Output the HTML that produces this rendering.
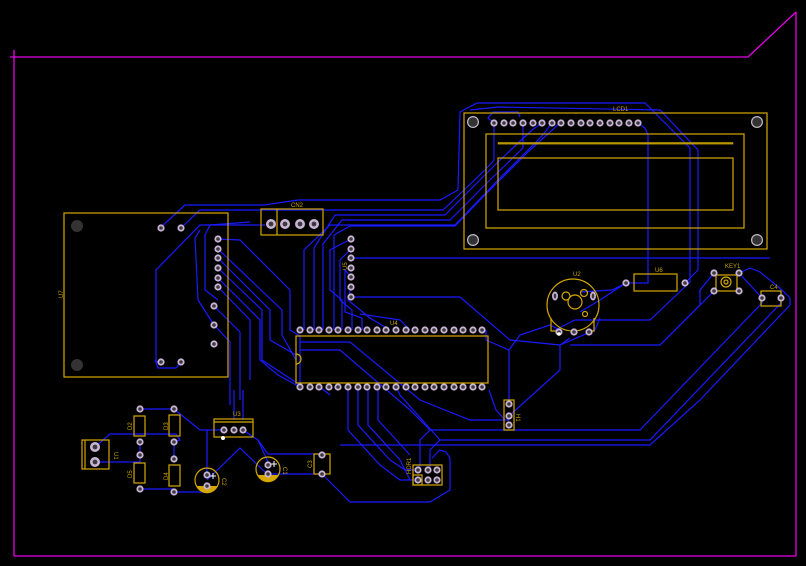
<!DOCTYPE html>
<html><head><meta charset="utf-8"><style>
html,body{margin:0;padding:0;background:#000;width:806px;height:566px;overflow:hidden}
svg{display:block}
text{font-family:"Liberation Sans",sans-serif;font-size:6px;fill:#c8a000}
</style></head><body>
<svg width="806" height="566" viewBox="0 0 806 566" xmlns="http://www.w3.org/2000/svg">
<defs>
<g id="p"><circle r="3.6" fill="#c9b3d6"/><circle r="1.8" fill="#3a3a3a"/></g>
<g id="pb"><circle r="5" fill="#c9b3d6"/><circle r="2.4" fill="#3a3a3a"/></g>
</defs>
<rect width="806" height="566" fill="#000"/>
<g stroke="#e600e6" stroke-width="1.3" fill="none">
<polyline points="10,57 748,57 796,12"/>
<line x1="796" y1="12" x2="796" y2="556"/>
<line x1="14" y1="50" x2="14" y2="556"/>
<line x1="14" y1="556" x2="796" y2="556"/>
</g>
<g stroke="#1a1aff" stroke-width="1.2" fill="none">
<polyline points="160,228 185,205 264,205 298,200 440,200 458,190 460,112 477,103 645,103 690,148 690,282 650,320 575,320 555,330"/>
<polyline points="181,228 200,210 443,210 464,190 485,170 494,160 494,123"/>
<polyline points="494,123 488,118 493,112 518,112 520,117"/>
<polyline points="304,330 304,250 330,225 455,225 498,180 516,162 542,136 552,123"/>
<polyline points="314,330 314,248 335,215 445,215 470,190 500,160 532,130 542,123"/>
<polyline points="323,330 323,244 342,220 450,220 490,180 523,148 523,123"/>
<polyline points="334,330 334,235 350,226 455,226 480,200 530,150 560,123"/>
<polyline points="351,258 770,258"/>
<polyline points="351,297 460,297 510,340 560,345 595,330 600,318"/>
<polyline points="638,123 645,128 648,135 648,283 626,283 600,300 580,312"/>
<polyline points="626,283 612,290 580,292"/>
<polyline points="685,283 698,270 698,150 660,110 498,107 470,110"/>
<polyline points="714,273 700,290 700,305 660,345 570,345"/>
<polyline points="739,273 750,268 760,272 782,290 790,298 790,305 700,400 650,445 340,445"/>
<polyline points="714,291 660,345"/>
<polyline points="739,273 762,298"/>
<polyline points="762,298 762,303 640,430 430,430 420,440 420,470"/>
<polyline points="781,298 781,303 650,440 440,440 430,450 430,470"/>
<polyline points="218,239 240,240 290,290 290,330 300,336 300,387"/>
<polyline points="218,249 282,310 282,335 296,360"/>
<polyline points="218,258 270,310 270,340 296,355"/>
<polyline points="218,268 262,310 262,360 300,385"/>
<polyline points="218,278 260,320 260,360 278,375 300,387"/>
<polyline points="218,287 250,320 250,380"/>
<polyline points="214,306 240,332 240,400"/>
<polyline points="214,325 230,342 230,405"/>
<polyline points="161,362 156,362 156,270 200,225 265,225"/>
<polyline points="181,362 176,368 158,368 155,360"/>
<polyline points="218,300 205,290 205,235 210,225 250,222"/>
<polyline points="200,230 195,238 198,300 214,325"/>
<polyline points="342,330 342,300 330,290 330,250 351,239"/>
<polyline points="352,330 352,310 340,300 340,260 351,249"/>
<polyline points="362,330 362,318 345,312 345,270 351,277"/>
<polyline points="351,287 348,300 370,318 390,330"/>
<polyline points="410,330 400,320 360,314"/>
<polyline points="300,342 350,342 420,400 470,420 509,420"/>
<polyline points="300,350 340,350 410,410 430,430"/>
<polyline points="486,330 486,340 509,350 509,404"/>
<polyline points="509,350 520,335 550,325 560,330"/>
<polyline points="509,416 560,370 560,345 570,338"/>
<polyline points="489,390 496,410 505,420"/>
<polyline points="348,387 348,430 380,465 400,480 417,480"/>
<polyline points="358,387 358,425 390,460 405,470 417,470"/>
<polyline points="368,387 368,425 400,460 410,480"/>
<polyline points="378,387 378,420 410,455"/>
<polyline points="432,458 440,450 446,452 450,458 450,490 430,502 350,502 322,474"/>
<polyline points="396,387 400,395 440,440"/>
<polyline points="320,387 330,395"/>
<polyline points="140,409 174,409"/>
<polyline points="140,489 174,489"/>
<polyline points="174,492 205,492 207,487"/>
<polyline points="95,447 110,434 176,434 180,440 174,442"/>
<polyline points="95,462 110,462 140,462 140,455"/>
<polyline points="140,442 140,455"/>
<polyline points="174,442 174,459"/>
<polyline points="174,409 200,430 224,430"/>
<polyline points="207,474 207,430"/>
<polyline points="207,480 240,448 265,472"/>
<polyline points="243,430 258,440 268,462"/>
<polyline points="258,440 268,454 322,454"/>
<polyline points="268,474 322,474"/>
<polyline points="234,420 234,390"/>
<polyline points="243,420 243,390"/>
</g>
<g stroke="#d4a800" stroke-width="1.2" fill="none">
<rect x="464" y="113" width="303" height="136"/>
<rect x="486" y="134" width="258" height="94"/>
<rect x="498" y="158" width="235" height="52"/>
<rect x="498" y="142.5" width="235" height="1.6" fill="#b89400" stroke-width="0.5"/>
<rect x="64" y="213" width="164" height="164"/>
<rect x="261" y="209" width="62" height="26"/>
<line x1="277" y1="209" x2="277" y2="235"/>
<rect x="296" y="336" width="192" height="47"/>
<circle cx="573" cy="305" r="26"/>
<circle cx="575" cy="302" r="7"/>
<circle cx="566" cy="296" r="4"/>
<circle cx="584" cy="293" r="3.5"/>
<circle cx="585" cy="314" r="2.5"/>
<polyline points="551,318 551,331 559,331"/>
<polyline points="594,318 594,331 590,331"/>
<rect x="634" y="274" width="43" height="17"/>
<rect x="716" y="275" width="21" height="16"/>
<circle cx="726" cy="282" r="5"/><circle cx="726" cy="282" r="2"/>
<rect x="761" y="291" width="20" height="15"/>
<rect x="504" y="400" width="10" height="30"/>
<rect x="413" y="465" width="29" height="20"/>
<rect x="413" y="475" width="9" height="10"/>
<rect x="82" y="440" width="27" height="29"/>
<line x1="85" y1="440" x2="85" y2="469"/>
<rect x="134" y="416" width="11" height="20"/>
<rect x="169" y="415" width="11" height="21"/>
<rect x="134" y="463" width="11" height="20"/>
<rect x="169" y="465" width="11" height="21"/>
<rect x="214" y="419" width="39" height="18"/>
<line x1="214" y1="422" x2="253" y2="422"/>
<circle cx="207" cy="480" r="12"/>
<circle cx="268" cy="469" r="12"/>
<rect x="314" y="454" width="16" height="20"/>
<path d="M296 354 a5 5 0 0 1 0 10"/>
</g>
<path d="M196 486 a12 12 0 0 0 22 0 z" fill="#d4a800"/>
<path d="M257 475 a12 12 0 0 0 22 0 z" fill="#d4a800"/>
<g stroke="#fff" stroke-width="1"><path d="M210 476h6M213 473v6M271 464h6M274 461v6"/></g>
<g fill="#c0b8c8"><circle cx="473" cy="122" r="6"/><circle cx="757" cy="122" r="6"/><circle cx="473" cy="240" r="6"/><circle cx="757" cy="240" r="6"/></g>
<g fill="#333"><circle cx="473" cy="122" r="4.8"/><circle cx="757" cy="122" r="4.8"/><circle cx="473" cy="240" r="4.8"/><circle cx="757" cy="240" r="4.8"/></g>
<g fill="#333"><circle cx="77" cy="226" r="6"/><circle cx="77" cy="365" r="6"/></g>
<g>
<use href="#p" x="494" y="123"/><use href="#p" x="504" y="123"/><use href="#p" x="513" y="123"/><use href="#p" x="523" y="123"/><use href="#p" x="533" y="123"/><use href="#p" x="542" y="123"/><use href="#p" x="552" y="123"/><use href="#p" x="561" y="123"/><use href="#p" x="571" y="123"/><use href="#p" x="581" y="123"/><use href="#p" x="590" y="123"/><use href="#p" x="600" y="123"/><use href="#p" x="610" y="123"/><use href="#p" x="619" y="123"/><use href="#p" x="629" y="123"/><use href="#p" x="638" y="123"/>
<use href="#pb" x="271" y="224"/><use href="#pb" x="285" y="224"/><use href="#pb" x="300" y="224"/><use href="#pb" x="314" y="224"/>
<use href="#p" x="161" y="228"/><use href="#p" x="181" y="228"/><use href="#p" x="161" y="362"/><use href="#p" x="181" y="362"/>
<use href="#p" x="218" y="239"/><use href="#p" x="218" y="249"/><use href="#p" x="218" y="258"/><use href="#p" x="218" y="268"/><use href="#p" x="218" y="278"/><use href="#p" x="218" y="287"/>
<use href="#p" x="214" y="306"/><use href="#p" x="214" y="325"/><use href="#p" x="214" y="344"/>
<use href="#p" x="351" y="239"/><use href="#p" x="351" y="249"/><use href="#p" x="351" y="258"/><use href="#p" x="351" y="268"/><use href="#p" x="351" y="277"/><use href="#p" x="351" y="287"/><use href="#p" x="351" y="297"/>
<use href="#p" x="300" y="330"/><use href="#p" x="310" y="330"/><use href="#p" x="319" y="330"/><use href="#p" x="329" y="330"/><use href="#p" x="338" y="330"/><use href="#p" x="348" y="330"/><use href="#p" x="358" y="330"/><use href="#p" x="367" y="330"/><use href="#p" x="377" y="330"/><use href="#p" x="386" y="330"/><use href="#p" x="396" y="330"/><use href="#p" x="406" y="330"/><use href="#p" x="415" y="330"/><use href="#p" x="425" y="330"/><use href="#p" x="434" y="330"/><use href="#p" x="444" y="330"/><use href="#p" x="454" y="330"/><use href="#p" x="463" y="330"/><use href="#p" x="473" y="330"/><use href="#p" x="482" y="330"/>
<use href="#p" x="300" y="387"/><use href="#p" x="310" y="387"/><use href="#p" x="319" y="387"/><use href="#p" x="329" y="387"/><use href="#p" x="338" y="387"/><use href="#p" x="348" y="387"/><use href="#p" x="358" y="387"/><use href="#p" x="367" y="387"/><use href="#p" x="377" y="387"/><use href="#p" x="386" y="387"/><use href="#p" x="396" y="387"/><use href="#p" x="406" y="387"/><use href="#p" x="415" y="387"/><use href="#p" x="425" y="387"/><use href="#p" x="434" y="387"/><use href="#p" x="444" y="387"/><use href="#p" x="454" y="387"/><use href="#p" x="463" y="387"/><use href="#p" x="473" y="387"/><use href="#p" x="482" y="387"/>
<use href="#p" x="559" y="332"/><use href="#p" x="574" y="332"/><use href="#p" x="589" y="332"/>
<use href="#p" x="626" y="283"/><use href="#p" x="685" y="283"/>
<use href="#p" x="714" y="273"/><use href="#p" x="739" y="273"/><use href="#p" x="714" y="291"/><use href="#p" x="739" y="291"/>
<use href="#p" x="762" y="298"/><use href="#p" x="781" y="298"/>
<use href="#p" x="509" y="404"/><use href="#p" x="509" y="416"/><use href="#p" x="509" y="425"/>
<use href="#p" x="418" y="470"/><use href="#p" x="428" y="470"/><use href="#p" x="437" y="470"/><use href="#p" x="418" y="480"/><use href="#p" x="428" y="480"/><use href="#p" x="437" y="480"/>
<use href="#pb" x="95" y="447"/><use href="#pb" x="95" y="462"/>
<use href="#p" x="140" y="409"/><use href="#p" x="174" y="409"/><use href="#p" x="140" y="442"/><use href="#p" x="174" y="442"/>
<use href="#p" x="140" y="455"/><use href="#p" x="174" y="459"/><use href="#p" x="140" y="489"/><use href="#p" x="174" y="492"/>
<use href="#p" x="224" y="430"/><use href="#p" x="234" y="430"/><use href="#p" x="243" y="430"/>
<use href="#p" x="207" y="475"/><use href="#p" x="207" y="486"/>
<use href="#p" x="268" y="465"/><use href="#p" x="268" y="474"/>
<use href="#p" x="322" y="455"/><use href="#p" x="322" y="474"/>
</g>
<g fill="#c9b3d6"><ellipse cx="555" cy="296" rx="3" ry="4.5"/><ellipse cx="593" cy="296" rx="3" ry="4.5"/></g>
<g fill="#3a3a3a"><ellipse cx="555" cy="296" rx="1.3" ry="2.5"/><ellipse cx="593" cy="296" rx="1.3" ry="2.5"/></g>
<circle cx="559" cy="334" r="1.8" fill="#fff"/>
<circle cx="223" cy="438" r="2" fill="#fff"/>
<text x="613" y="111">LCD1</text>
<text x="291" y="207">CN2</text>
<text x="390" y="325">U4</text>
<text x="573" y="276">U2</text>
<text x="655" y="272">U6</text>
<text x="725" y="268">KEY1</text>
<text x="770" y="289">C4</text>
<text x="233" y="416">U3</text>
<text transform="translate(63,298) rotate(-90)">U7</text>
<text transform="translate(347,270) rotate(-90)">U5</text>
<text transform="translate(132,430) rotate(-90)">D2</text>
<text transform="translate(168,430) rotate(-90)">D3</text>
<text transform="translate(132,478) rotate(-90)">D5</text>
<text transform="translate(168,480) rotate(-90)">D4</text>
<text transform="translate(114,452) rotate(90)">U1</text>
<text transform="translate(222,478) rotate(90)">C2</text>
<text transform="translate(283,467) rotate(90)">C1</text>
<text transform="translate(312,468) rotate(-90)">C3</text>
<text transform="translate(411,474) rotate(-90)">HDR1</text>
<text transform="translate(516,414) rotate(90)">H1</text>
</svg>
</body></html>
